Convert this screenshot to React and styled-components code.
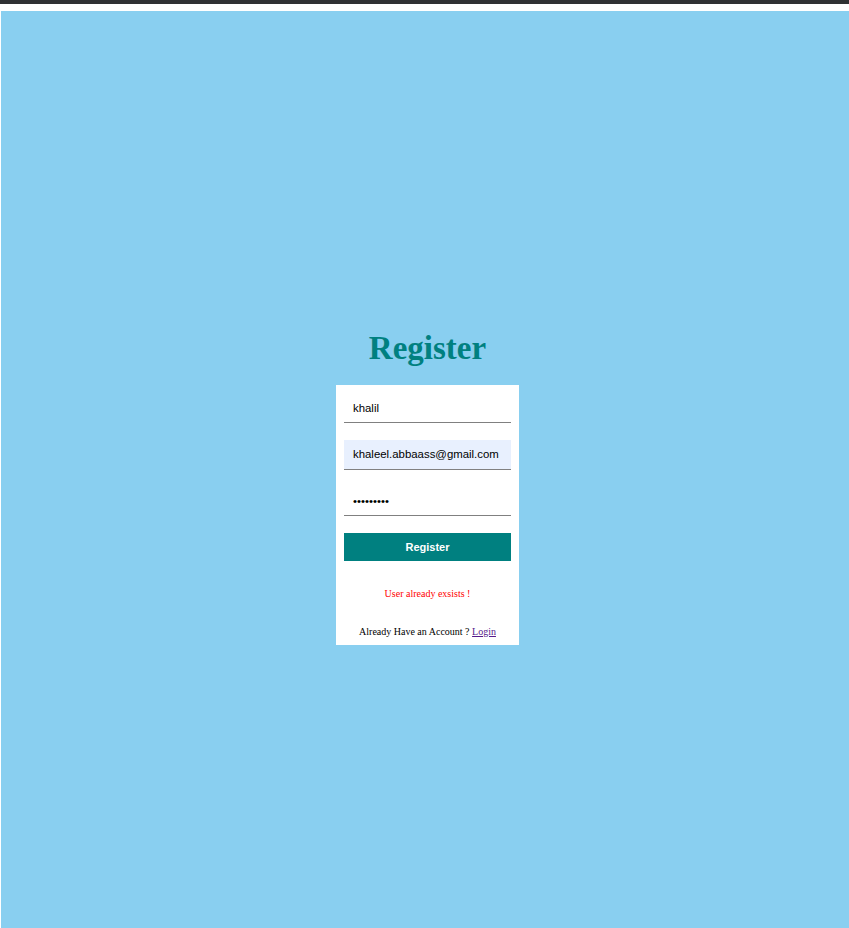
import React, { useState } from 'react';
import styled, { createGlobalStyle } from 'styled-components';

const GlobalStyle = createGlobalStyle`
  html, body {
    margin: 0;
    padding: 0;
    background: #ffffff;
    font-family: 'Liberation Serif', 'Times New Roman', serif;
  }
  * {
    box-sizing: border-box;
  }
`;

const App = () => {
  const [name, setName] = useState('khalil');
  const [email, setEmail] = useState('khaleel.abbaass@gmail.com');
  const [password, setPassword] = useState('123456789');

  return (
    <Page>
      <GlobalStyle />
      <TopBar />
      <Main>
        <Title>Register</Title>
        <Form onSubmit={e => e.preventDefault()}>
          <Input
            type="text"
            value={name}
            onChange={e => setName(e.target.value)}
          />
          <Input
            type="email"
            $autofill
            value={email}
            onChange={e => setEmail(e.target.value)}
          />
          <Input
            type="password"
            value={password}
            onChange={e => setPassword(e.target.value)}
          />
          <Button type="submit">Register</Button>
          <Error>User already exsists !</Error>
          <Footer>
            Already Have an Account ? <a href="#login">Login</a>
          </Footer>
        </Form>
      </Main>
    </Page>
  );
};

export default App;

// Styled Components

const Page = styled.div`
  min-height: 100vh;
  display: flex;
  flex-direction: column;
`;

const TopBar = styled.div`
  height: 4px;
  background-color: #2f3133;
  margin-bottom: 7px;
`;

const Main = styled.main`
  flex: 1;
  margin-left: 1px;
  background-color: #89cff0;
  display: flex;
  flex-direction: column;
  align-items: center;
  padding: 314px 0 0 5px;
`;

const Title = styled.h1`
  margin: 0 0 13px;
  color: #008080;
  font-family: 'Liberation Serif', 'Times New Roman', serif;
  font-weight: bold;
  font-size: 33px;
  line-height: 47px;
`;

const Form = styled.form`
  width: 183px;
  background-color: #ffffff;
  padding: 8px 8px 7px;
  display: flex;
  flex-direction: column;
`;

const Input = styled.input`
  height: 30px;
  width: 100%;
  margin-bottom: 16.5px;
  padding: 0 8px 0 9px;
  border: none;
  border-bottom: 1px solid #808080;
  outline: none;
  background-color: ${p => (p.$autofill ? '#e8f0fe' : '#ffffff')};
  color: #000000;
  font-family: 'Liberation Sans', Arial, sans-serif;
  font-size: 11.4px;
`;

const Button = styled.button`
  height: 28px;
  width: 100%;
  border: none;
  background-color: #008080;
  color: #ffffff;
  font-family: 'Liberation Sans', Arial, sans-serif;
  font-weight: bold;
  font-size: 11px;
  cursor: pointer;
`;

const Error = styled.p`
  margin: 26px 0 0;
  text-align: center;
  color: #ff0000;
  font-family: 'Liberation Serif', 'Times New Roman', serif;
  font-size: 10px;
  line-height: 13px;
`;

const Footer = styled.p`
  margin: 25px 0 0;
  text-align: center;
  color: #000000;
  font-family: 'Liberation Serif', 'Times New Roman', serif;
  font-size: 10px;
  line-height: 13px;

  a {
    color: #551a8b;
  }
`;
